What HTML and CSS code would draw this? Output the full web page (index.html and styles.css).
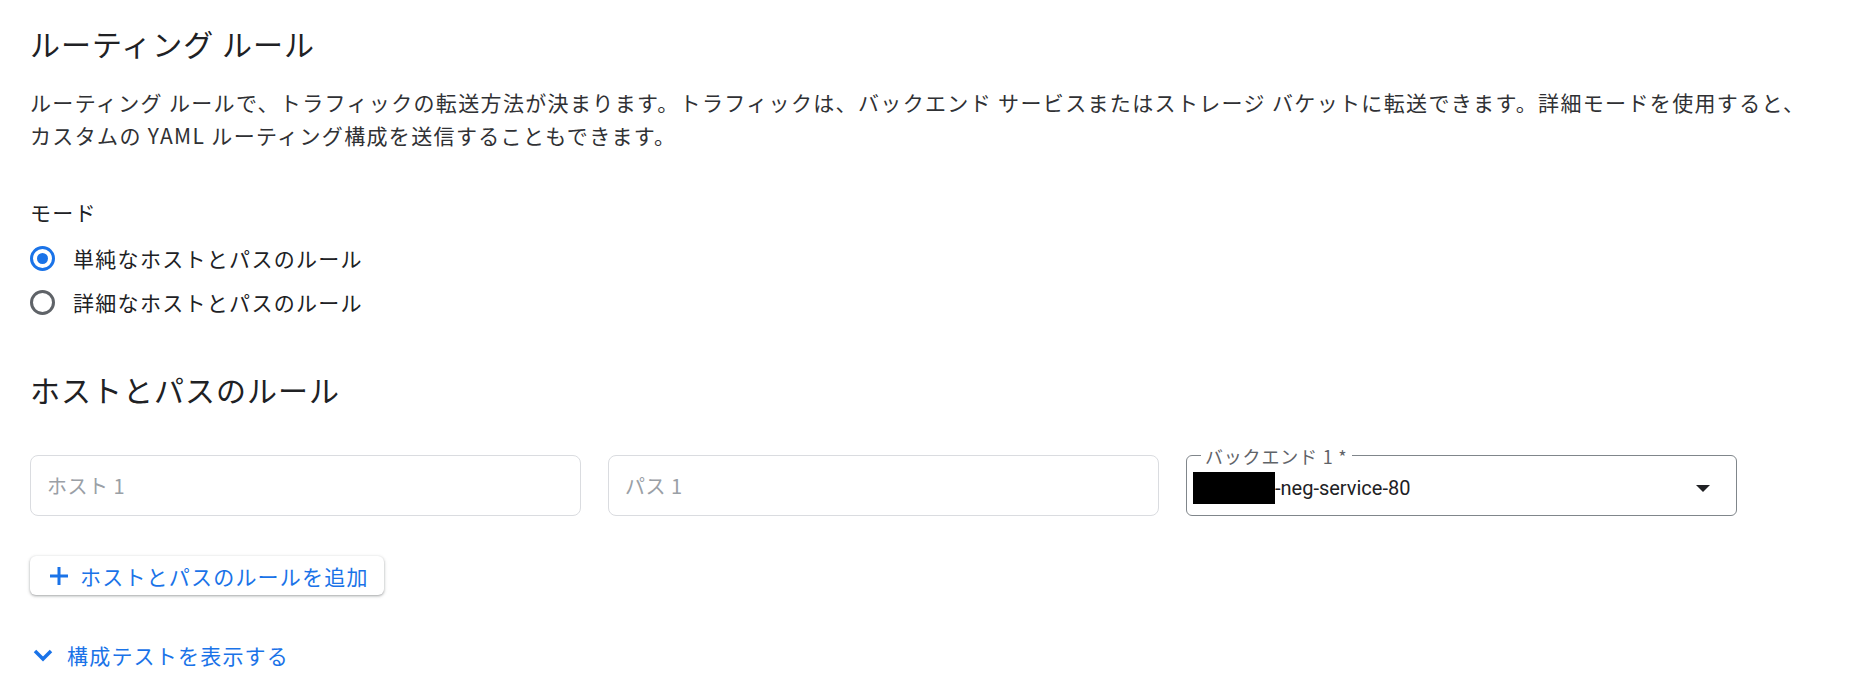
FILE: index.html
```html
<!doctype html>
<html>
<head>
    <meta charset="utf-8">
    <title>ルーティング ルール</title>
    <link rel="stylesheet" href="styles.css">
</head>
<body>
    <div class="page">
        <h1 class="title">ルーティング ルール</h1>
        <p class="desc">ルーティング ルールで、トラフィックの転送方法が決まります。トラフィックは、バックエンド サービスまたはストレージ バケットに転送できます。詳細モードを使用すると、カスタムの YAML ルーティング構成を送信することもできます。</p>

        <!-- Modo -->
        <div class="mode">
            <div class="mode-label">モード</div>
            <label class="radio"><span class="radio-circle checked"></span>単純なホストとパスのルール</label>
            <label class="radio"><span class="radio-circle"></span>詳細なホストとパスのルール</label>
        </div>

        <h2 class="subtitle">ホストとパスのルール</h2>

        <div class="rules-row">
            <input class="field" type="text" placeholder="ホスト 1">
            <input class="field" type="text" placeholder="パス 1">
            <div class="select">
                <span class="select-label">バックエンド 1 *</span>
                <span class="redacted"></span>
                <span class="select-value">-neg-service-80</span>
                <svg class="select-arrow" width="14" height="7" viewBox="0 0 14 7"><polygon points="0,0 14,0 7,7" fill="#202124"/></svg>
            </div>
        </div>

        <div class="add-wrap">
            <button class="add-button">
                <svg width="22" height="22" viewBox="0 0 22 22"><path d="M11 2v18M2 11h18" stroke="#1a73e8" stroke-width="3"/></svg>
                ホストとパスのルールを追加
            </button>
        </div>

        <a class="test-link" href="#">
            <svg width="20" height="13" viewBox="0 0 20 13"><polyline points="2,2 10,10 18,2" fill="none" stroke="#1a73e8" stroke-width="3.5"/></svg>
            構成テストを表示する
        </a>
    </div>
</body>
</html>
```

FILE: styles.css
```css
body {
    margin: 0;
    background-color: white;
    font-family: "Noto Sans CJK JP", "Noto Sans", sans-serif;
    color: #202124;
}
.page {
    padding: 23px 35px 0 30px;
}
.title, .subtitle {
    margin: 0;
    font-size: 30px;
    line-height: 40px;
    font-weight: 400;
    letter-spacing: 1px;
}
.desc {
    margin: 23px 0 0;
    font-size: 21px;
    line-height: 33px;
    letter-spacing: 1.35px;
    color: #303134;
}
.mode {
    margin-top: 45px;
}
.mode-label {
    font-size: 21px;
    line-height: 30px;
    letter-spacing: 1.3px;
    margin-bottom: 9px;
}
.radio {
    display: flex;
    align-items: center;
    gap: 18px;
    height: 44px;
    font-size: 21px;
    letter-spacing: 1.3px;
    cursor: pointer;
}
.radio-circle {
    box-sizing: border-box;
    width: 25px;
    height: 25px;
    border: 3px solid #5f6368;
    border-radius: 50%;
    display: flex;
    align-items: center;
    justify-content: center;
}
.radio-circle.checked {
    border-color: #1a73e8;
}
.radio-circle.checked::after {
    content: "";
    width: 11px;
    height: 11px;
    border-radius: 50%;
    background-color: #1a73e8;
}
.subtitle {
    margin-top: 45px;
}
.rules-row {
    display: flex;
    gap: 27px;
    margin-top: 46px;
}
.field {
    box-sizing: border-box;
    width: 551px;
    height: 61px;
    border: 1px solid #dadce0;
    border-radius: 8px;
    padding: 0 16px;
    font-family: inherit;
    font-size: 20px;
    letter-spacing: 0.5px;
    outline: none;
}
.field::placeholder {
    color: #9aa0a6;
}
.select {
    position: relative;
    box-sizing: border-box;
    width: 551px;
    height: 61px;
    border: 1px solid #80868b;
    border-radius: 6px;
    display: flex;
    align-items: center;
    padding: 5px 0 0 6px;
}
.select-label {
    position: absolute;
    top: -12px;
    left: 14px;
    padding: 0 5px 0 4px;
    background-color: white;
    font-size: 18px;
    line-height: 24px;
    letter-spacing: 0.8px;
    color: #5f6368;
}
.redacted {
    width: 82px;
    height: 32px;
    background-color: black;
}
.select-value {
    font-family: Roboto, "Liberation Sans", sans-serif;
    font-size: 20px;
    color: #202124;
}
.select-arrow {
    margin-left: auto;
    margin-right: 26px;
}
.add-wrap {
    margin-top: 40px;
}
.add-button {
    display: inline-flex;
    align-items: center;
    gap: 10px;
    height: 39px;
    padding: 0 15px 0 18px;
    border: none;
    border-radius: 6px;
    background-color: white;
    box-shadow: 0 1px 2px rgba(60, 64, 67, 0.3), 0 1px 3px 1px rgba(60, 64, 67, 0.15);
    color: #1a73e8;
    font-family: inherit;
    font-size: 21px;
    letter-spacing: 1.2px;
    cursor: pointer;
}
.test-link {
    display: inline-flex;
    align-items: center;
    gap: 14px;
    margin-top: 45px;
    padding-left: 3px;
    height: 30px;
    font-size: 21px;
    letter-spacing: 1.2px;
    color: #1a73e8;
    text-decoration: none;
}
```
